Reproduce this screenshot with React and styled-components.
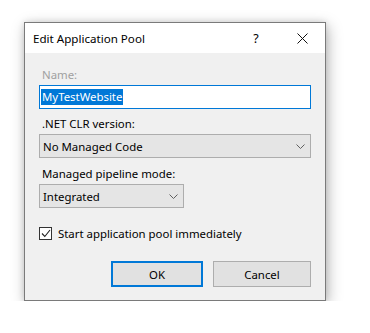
import React from "react";
import styled, { createGlobalStyle } from "styled-components";

const Global = createGlobalStyle`
  html, body { margin: 0; padding: 0; background: #ffffff; }
  body { font-family: "Noto Sans", "Open Sans", sans-serif; font-size: 11.4px; color: #000; }
`;

const Page = styled.div`
  padding: 22px 0 0 24px;
`;

const Dialog = styled.div`
  width: 300px;
  border: 1px solid #7a7a7a;
  background: #f0f0f0;
  box-shadow: 2px 4px 14px rgba(0, 0, 0, 0.28), 0 0 6px rgba(0, 0, 0, 0.12);
`;

const TitleBar = styled.div`
  height: 30px;
  background: #ffffff;
  display: flex;
  align-items: center;
  padding-left: 8px;
`;

const Title = styled.div`
  flex: 1;
  font-size: 11.6px;
`;

const TitleButton = styled.div`
  width: ${(p) => p.$w}px;
  height: 30px;
  display: flex;
  align-items: center;
  justify-content: center;
  font-size: 12.5px;
`;

const Body = styled.div`
  padding: 14px 14px 13px 14px;
  display: flex;
  flex-direction: column;
`;

const Label = styled.div`
  height: 16px;
  line-height: 16px;
  padding-left: 3px;
  margin-top: ${(p) => p.$mt || 0}px;
  margin-bottom: 2px;
  color: ${(p) => (p.$disabled ? "#a0a0a0" : "#000")};
`;

const TextBox = styled.div`
  height: 22px;
  border: 1px solid #0078d7;
  background: #ffffff;
  display: flex;
  align-items: center;
  padding-left: 1px;
`;

const Selected = styled.span`
  background: #0078d7;
  color: #ffffff;
  line-height: 16px;
  padding: 0 1px;
`;

const Select = styled.div`
  width: ${(p) => p.$w}px;
  box-sizing: border-box;
  height: 24px;
  border: 1px solid #adadad;
  background: #e5e5e5;
  display: flex;
  align-items: center;
  justify-content: space-between;
  padding: 0 5px 0 3px;
`;

const CheckRow = styled.div`
  display: flex;
  align-items: center;
  gap: 6px;
  margin-top: 18px;
  height: 14px;
`;

const Box = styled.div`
  width: 11px;
  height: 11px;
  border: 1px solid #333333;
  background: #ffffff;
  display: flex;
  align-items: center;
  justify-content: center;
`;

const Buttons = styled.div`
  display: flex;
  justify-content: flex-end;
  gap: 10px;
  margin-top: 21px;
`;

const Button = styled.div`
  box-sizing: border-box;
  width: ${(p) => p.$w}px;
  height: 26px;
  background: #e1e1e1;
  border: ${(p) => (p.$default ? "2px solid #0078d7" : "1px solid #adadad")};
  display: flex;
  align-items: center;
  justify-content: center;
`;

const Chevron = () => (
  <svg width="9" height="5" viewBox="0 0 9 5">
    <path d="M0.5 0.5 L4.5 4.5 L8.5 0.5" fill="none" stroke="#606060" strokeWidth="1" />
  </svg>
);

export default function App() {
  return (
    <>
      <Global />
      <Page>
        <Dialog>
          <TitleBar>
            <Title>Edit Application Pool</Title>
            <TitleButton $w={46}>?</TitleButton>
            <TitleButton $w={46}>
              <svg width="11" height="11" viewBox="0 0 11 11">
                <path d="M0.5 0.5 L10.5 10.5 M10.5 0.5 L0.5 10.5" stroke="#111" strokeWidth="1" />
              </svg>
            </TitleButton>
          </TitleBar>
          <Body>
            <Label $disabled>Name:</Label>
            <TextBox>
              <Selected>MyTestWebsite</Selected>
            </TextBox>
            <Label $mt={7}>.NET CLR version:</Label>
            <Select $w={272}>
              <span>No Managed Code</span>
              <Chevron />
            </Select>
            <Label $mt={8}>Managed pipeline mode:</Label>
            <Select $w={145}>
              <span>Integrated</span>
              <Chevron />
            </Select>
            <CheckRow>
              <Box>
                <svg width="10" height="9" viewBox="0 0 10 9">
                  <path d="M1 4.5 L3.8 7.5 L9 1" fill="none" stroke="#222" strokeWidth="1.1" />
                </svg>
              </Box>
              <span>Start application pool immediately</span>
            </CheckRow>
            <Buttons>
              <Button $w={92} $default>OK</Button>
              <Button $w={98}>Cancel</Button>
            </Buttons>
          </Body>
        </Dialog>
      </Page>
    </>
  );
}
